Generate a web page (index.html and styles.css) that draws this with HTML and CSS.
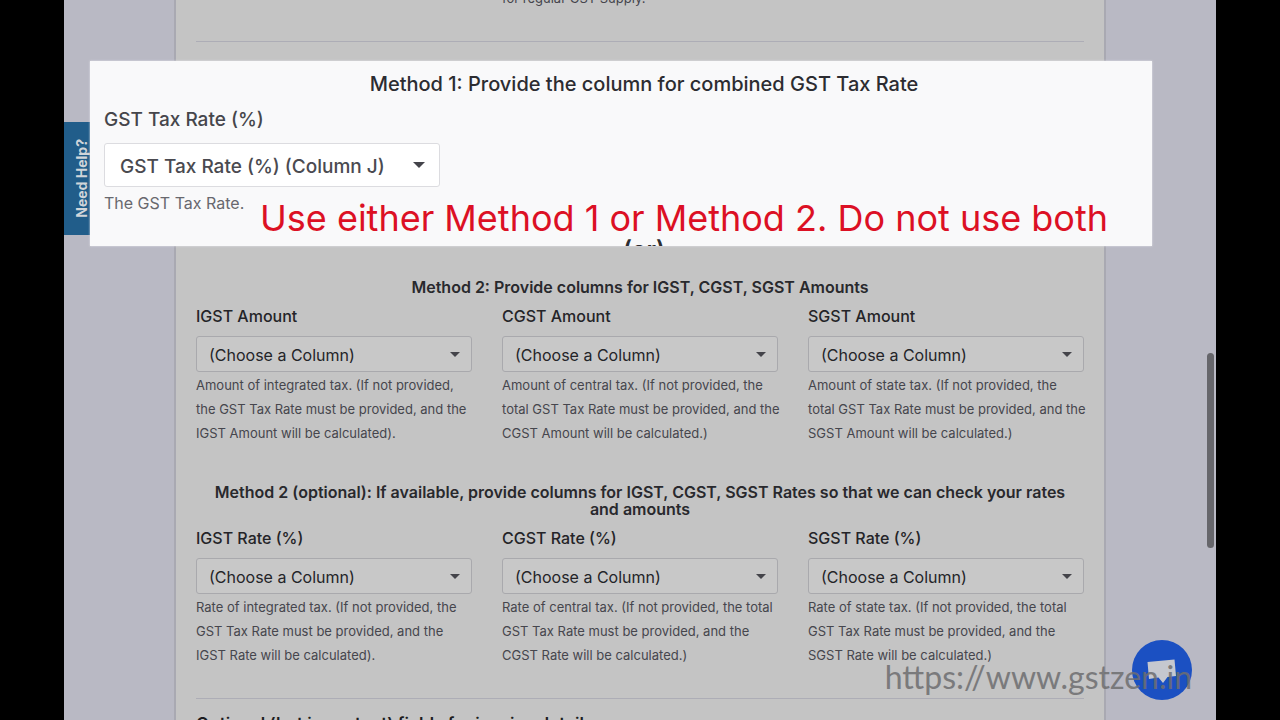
FILE: index.html
```
<!DOCTYPE html>
<html lang="en">
<head>
<meta charset="utf-8">
<title>GSTZen</title>
<link rel="stylesheet" href="styles.css">
</head>
<body>
<div class="stage">
  <main class="card">
    <div class="row">
      <p class="hint second">for regular GST Supply.</p>
    </div>
    <hr class="rule">
    <section class="taxes">
      <h2 class="section-title faded">Field 18: Invoice: Item: Tax</h2>
    </section>
    <section class="group">
      <h3 class="title">Method 2: Provide columns for IGST, CGST, SGST Amounts</h3>
      <div class="row">
        <div class="field">
          <label class="label" for="igst-amt">IGST Amount</label>
          <select class="select" id="igst-amt"><option>(Choose a Column)</option></select>
          <p class="hint">Amount of integrated tax. (If not provided, the GST Tax Rate must be provided, and the IGST Amount will be calculated).</p>
        </div>
        <div class="field">
          <label class="label" for="cgst-amt">CGST Amount</label>
          <select class="select" id="cgst-amt"><option>(Choose a Column)</option></select>
          <p class="hint">Amount of central tax. (If not provided, the total&nbsp;GST Tax Rate must be provided, and the CGST Amount will be calculated.)</p>
        </div>
        <div class="field">
          <label class="label" for="sgst-amt">SGST Amount</label>
          <select class="select" id="sgst-amt"><option>(Choose a Column)</option></select>
          <p class="hint">Amount of state tax. (If not provided, the total&nbsp;GST Tax Rate must be provided, and the SGST Amount will be calculated.)</p>
        </div>
      </div>
    </section>
    <section class="group">
      <h3 class="title">Method 2 (optional): If available, provide columns for IGST, CGST, SGST Rates so that we can check your rates and amounts</h3>
      <div class="row">
        <div class="field">
          <label class="label" for="igst-rate">IGST Rate (%)</label>
          <select class="select" id="igst-rate"><option>(Choose a Column)</option></select>
          <p class="hint">Rate of integrated tax. (If not provided, the GST Tax Rate must be provided, and the IGST Rate will be calculated).</p>
        </div>
        <div class="field">
          <label class="label" for="cgst-rate">CGST Rate (%)</label>
          <select class="select" id="cgst-rate"><option>(Choose a Column)</option></select>
          <p class="hint">Rate of central tax. (If not provided, the total GST Tax Rate must be provided, and the CGST Rate will be calculated.)</p>
        </div>
        <div class="field">
          <label class="label" for="sgst-rate">SGST Rate (%)</label>
          <select class="select" id="sgst-rate"><option>(Choose a Column)</option></select>
          <p class="hint">Rate of state tax. (If not provided, the total GST Tax Rate must be provided, and the SGST Rate will be calculated.)</p>
        </div>
      </div>
    </section>
    <hr class="rule">
    <h2 class="section-title">Optional (but important) fields for invoice details</h2>
  </main>

  <button class="help" type="button">Need Help?</button>

  <section class="callout">
    <h3 class="callout-title">Method 1: Provide the column for combined GST Tax Rate</h3>
    <label class="callout-label" for="gst-rate">GST Tax Rate (%)</label>
    <select class="select callout-select" id="gst-rate"><option>GST Tax Rate (%) (Column J)</option></select>
    <p class="callout-hint">The GST Tax Rate.</p>
    <p class="callout-or">(or)</p>
    <p class="notice">Use either Method 1 or Method 2. Do not use both</p>
  </section>

  <div class="scrollbar"></div>
  <button class="chat" type="button" aria-label="Open chat">
    <svg width="60" height="60" viewBox="0 0 60 60" aria-hidden="true"><path d="M15.500 22 42.500 19.500 44 36 35.500 37 31 43 26.500 37.500 17 39z" fill="#c5c8cf"/></svg>
  </button>
  <div class="watermark">https://www.gstzen.in</div>
</div>
</body>
</html>
```
FILE: styles.css
```
* { box-sizing: border-box; }
body {
  margin: 0;
  background: #000;
  font-family: Inter, "Liberation Sans", sans-serif;
  overflow: hidden;
}
h2, h3, p { margin: 0; }
.stage {
  position: relative;
  height: 100vh;
  margin: 0 5%;
  background: #b9b9c4;
  overflow: hidden;
}
.card {
  margin: -15px 110px 0;
  padding: 0 20px;
  background: #c4c4c4;
  border: solid #a9a9b2;
  border-width: 0 2px;
}
.row {
  display: grid;
  grid-template-columns: repeat(3, 1fr);
  gap: 30px;
}
.second { grid-column: 2; }
.rule {
  height: 1px;
  margin: 31px 0 0;
  border: 0;
  background: #adadb6;
}
.taxes { height: 237px; padding-top: 17px; }
.section-title {
  padding-top: 13px;
  font-size: 17px;
  line-height: 24px;
  font-weight: 600;
  color: #1c1c20;
}
.faded { padding-top: 0; font-weight: 400; color: #85858c; }
.group { margin-bottom: 39px; }
.group + .rule { margin-top: -8px; }
.title {
  margin-bottom: 11px;
  padding: 0 10px;
  font-size: 16px;
  line-height: 17px;
  font-weight: 600;
  text-align: center;
  color: #29292d;
}
.label {
  display: block;
  margin-bottom: 11px;
  font-size: 16px;
  line-height: 18px;
  font-weight: 500;
  color: #242428;
}
.select {
  display: block;
  width: 100%;
  height: 36px;
  padding: 2px 12px 0;
  appearance: none;
  border: 1px solid #a9a9ad;
  border-radius: 3px;
  background: #c8c8c8 url("data:image/svg+xml,%3Csvg xmlns='http://www.w3.org/2000/svg' viewBox='0 0 10 5' width='10' height='5'%3E%3Cpath d='M0 0h10L5 5z' fill='%2344444a'/%3E%3C/svg%3E") no-repeat right 11px center;
  font: 400 16px/24px Inter, "Liberation Sans", sans-serif;
  color: #242428;
}
.hint {
  margin: 1px -4px 0 0;
  font-size: 13px;
  line-height: 24px;
  font-weight: 400;
  color: #46464d;
}
.help {
  position: absolute;
  left: 0;
  top: 122px;
  width: 30px;
  height: 113px;
  padding: 0 0 0 4px;
  border: 0;
  background: #215d8a;
  color: #d0d5da;
  font: 700 14px/28px Inter, "Liberation Sans", sans-serif;
  writing-mode: sideways-lr;
}
.callout {
  position: absolute;
  left: 26px;
  right: 64px;
  top: 61px;
  height: 185px;
  padding: 12px 14px;
  background: #f9f9fa;
  box-shadow: 0 0 2px #e4e4e8;
  overflow: hidden;
}
.callout-title {
  padding-left: 46px;
  margin-bottom: 13px;
  font-size: 20px;
  line-height: 22px;
  font-weight: 500;
  text-align: center;
  color: #2c2c31;
}
.callout-label {
  display: block;
  margin-bottom: 12px;
  font-size: 19px;
  line-height: 23px;
  font-weight: 500;
  color: #46464b;
}
.callout-select {
  width: 336px;
  height: 44px;
  padding: 4px 15px 0;
  border-color: #dcdce0;
  background-color: #fff;
  background-position: right 14px center;
  background-size: 12px 6px;
  font-size: 19px;
  font-weight: 500;
  color: #4a4a50;
}
.callout-hint {
  margin-top: 4px;
  font-size: 16px;
  line-height: 24px;
  font-weight: 400;
  color: #68686e;
}
.callout-or {
  position: absolute;
  left: 533px;
  top: 175px;
  font-size: 24px;
  line-height: 28px;
  font-weight: 600;
  color: #2c2c30;
}
.notice {
  position: absolute;
  left: 170px;
  top: 135px;
  font-size: 36px;
  line-height: 44px;
  white-space: nowrap;
  color: #dc1024;
}
.scrollbar {
  position: absolute;
  right: 2px;
  top: 353px;
  width: 7px;
  height: 195px;
  border-radius: 4px;
  background: #66666b;
}
.chat {
  position: absolute;
  right: 24px;
  bottom: 20px;
  width: 60px;
  height: 60px;
  padding: 0;
  border: 0;
  border-radius: 50%;
  background: #1b50c2;
}
.watermark {
  position: absolute;
  right: 24px;
  bottom: 24px;
  font: 400 32px/38px Lato, sans-serif;
  color: #6e6e70;
  opacity: 0.85;
}
```
